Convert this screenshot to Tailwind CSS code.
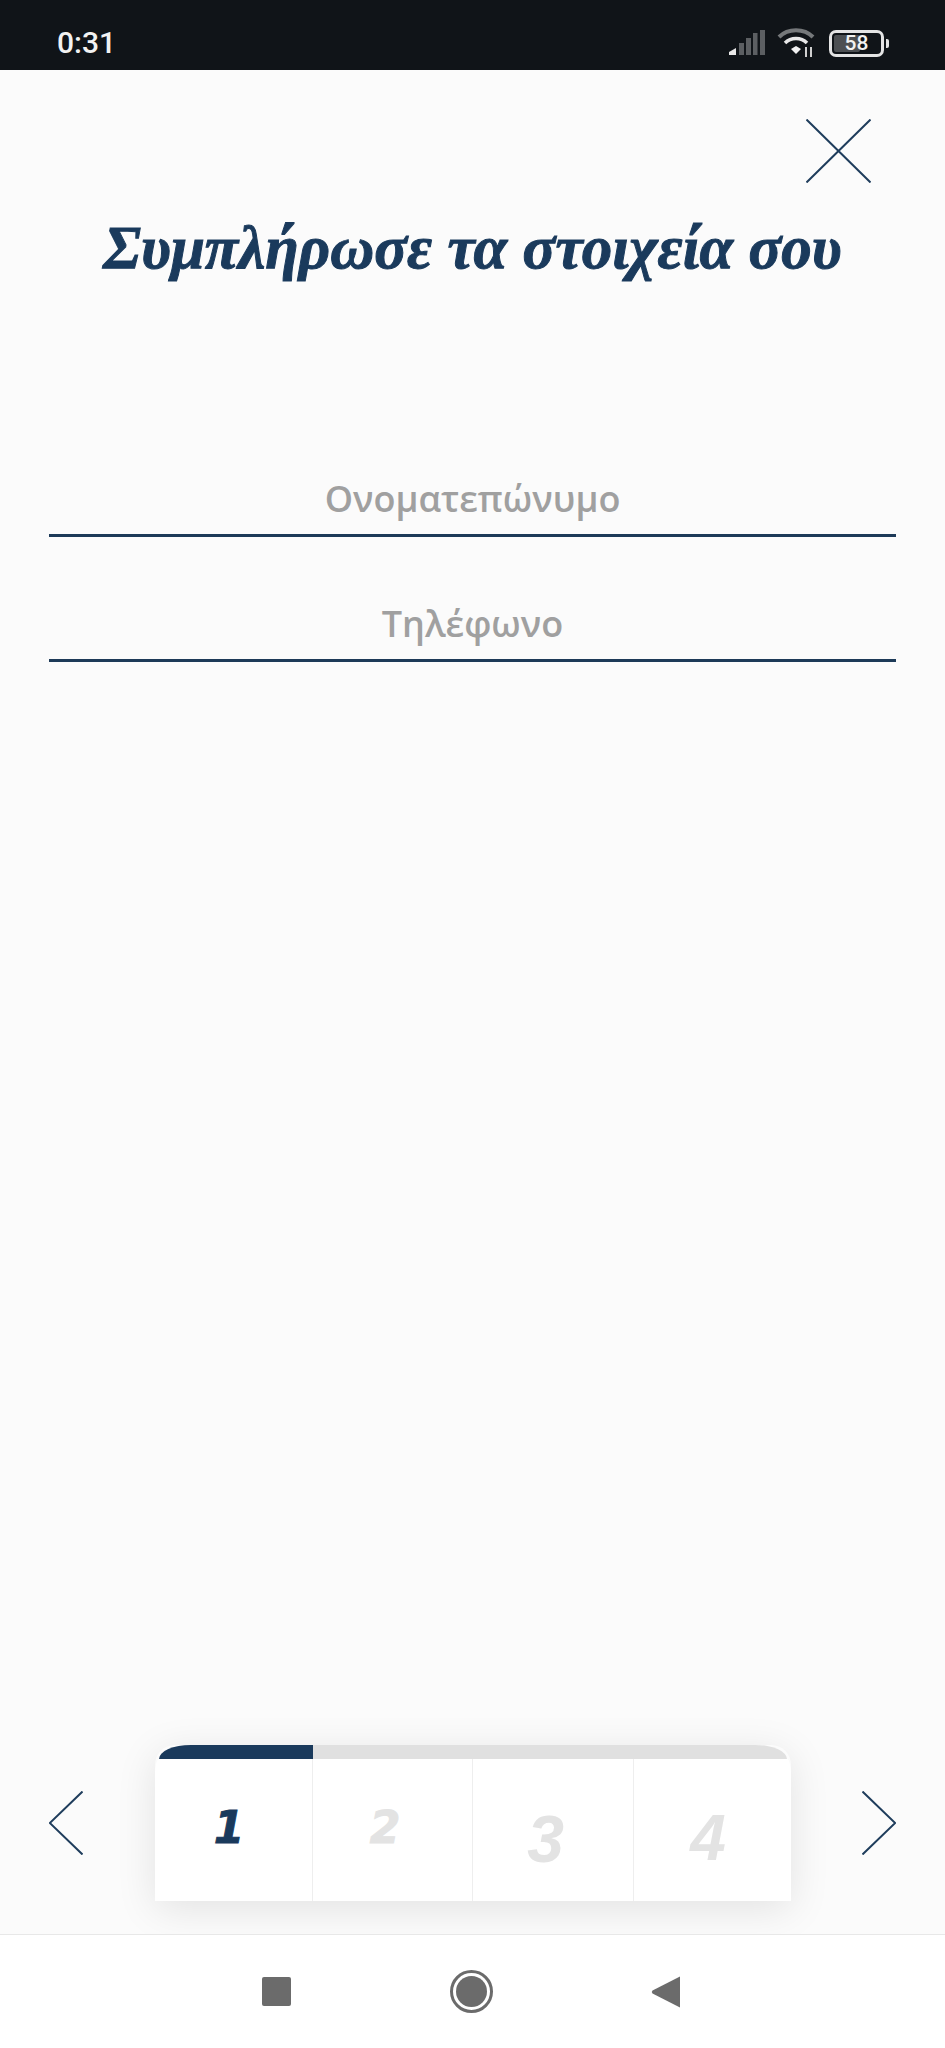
<!DOCTYPE html>
<html lang="el">
<head>
  <meta charset="UTF-8">
  <meta name="viewport" content="width=device-width, initial-scale=1.0">
  <title>Συμπλήρωσε τα στοιχεία σου</title>
  <script src="https://cdn.jsdelivr.net/npm/@tailwindcss/browser@4"></script>
</head>
<body class="h-screen flex flex-col bg-[#fbfbfb] overflow-hidden">
  <!-- Status bar -->
  <div class="h-[70px] shrink-0 bg-[#101418] flex items-center pl-[57px] pr-[56px] pt-[16px]">
    <span class="font-['Roboto',sans-serif] font-medium text-[30px] leading-none text-[#f2f2f2]">0:31</span>
    <div class="ml-auto flex items-center">
      <svg class="w-[36px] h-[26px]" viewBox="0 0 36 26">
        <path d="M0 25v-3l7-4v7z" fill="#e8e8e8"/>
        <rect x="10" y="13" width="5" height="12" fill="#5c5f62"/>
        <rect x="17" y="8" width="5" height="17" fill="#5c5f62"/>
        <rect x="24" y="3" width="4.500" height="22" fill="#5c5f62"/>
        <rect x="31" y="0" width="5" height="25" fill="#5c5f62"/>
      </svg>
      <svg class="w-[40px] h-[30px] ml-[12px]" viewBox="0 0 40 30" fill="none">
        <path d="M2 9C11 0 27 0 36 9" stroke="#75787a" stroke-width="4"/>
        <path d="M8 15C14 9 24 9 30 15" stroke="#e8e8e8" stroke-width="3.5"/>
        <path d="M14 21l5-3 5 3-5 5z" fill="#f2f2f2"/>
        <rect x="28" y="19" width="2" height="10" fill="#d0d0d0"/>
        <rect x="33" y="19" width="2" height="10" fill="#d0d0d0"/>
      </svg>
      <div class="ml-[12px] relative w-[55px] h-[27px] rounded-[7px] border-[3px] border-[#e4e4e4] p-[2px]">
        <div class="h-full w-[58%] bg-[#4c4f52] rounded-[2px]"></div>
        <span class="absolute inset-0 flex items-center justify-center font-['Roboto',sans-serif] font-medium text-[21px] leading-none text-[#f2f2f2]">58</span>
      </div>
      <div class="ml-[2px] w-[3px] h-[9px] bg-[#e4e4e4] rounded-r-[2px]"></div>
    </div>
  </div>

  <main class="flex-1 flex flex-col">
    <!-- Close -->
    <div class="flex justify-end pt-[49px] pr-[74px]">
      <button aria-label="Close">
        <svg class="block w-[65px] h-[64px]" viewBox="0 0 65 64" fill="none" stroke="#1f3d5c" stroke-width="2">
          <path d="M0.5 0.5L64.5 63.5M64.5 0.5L0.5 63.5"/>
        </svg>
      </button>
    </div>

    <h1 class="mt-[30px] text-center font-['Liberation_Serif',serif] font-bold italic text-[61px] leading-[70px] text-[#1a3a5c] [-webkit-text-stroke:1px_#1a3a5c]">Συμπλήρωσε τα στοιχεία σου</h1>

    <!-- Form -->
    <div class="mt-[190px] mx-[49px] flex flex-col gap-[61px] font-['Open_Sans',sans-serif] font-semibold text-[36px]">
      <input type="text" placeholder="Ονοματεπώνυμο" class="w-full h-[64px] pb-[10px] text-center border-b-[3px] border-[#1d3a58] outline-none placeholder:text-[#a0a0a0]">
      <input type="text" placeholder="Τηλέφωνο" class="w-full h-[64px] pb-[10px] text-center border-b-[3px] border-[#1d3a58] outline-none placeholder:text-[#a0a0a0]">
    </div>

    <!-- Stepper -->
    <div class="mt-auto mb-[33px] px-[49px] flex items-center justify-between">
      <button aria-label="Previous">
        <svg class="block w-[34px] h-[64px]" viewBox="0 0 34 64" fill="none" stroke="#1f3d5c" stroke-width="2">
          <path d="M33.5 0.5L0.8 32L33.5 63.5"/>
        </svg>
      </button>

      <div class="w-[636px] shadow-[0_8px_40px_rgba(0,0,0,0.1)] rounded-t-[20px]">
        <div class="mx-[4px] h-[14px] flex bg-[#e0e0e0] rounded-t-[32px_14px] overflow-hidden">
          <div class="w-[154px] bg-[#1a3a5c]"></div>
        </div>
        <div class="h-[142px] bg-white rounded-t-[4px_16px] flex font-bold italic leading-none text-[#e3e3e3]">
          <div class="w-[158px] flex justify-center pt-[47px] pr-[8px] font-['DejaVu_Sans',sans-serif] text-[44px] text-[#1a3a5c] [-webkit-text-stroke:1px_#1a3a5c] border-r border-[#eeeeee]">1</div>
          <div class="w-[160px] flex justify-center pt-[47px] pr-[14px] font-['DejaVu_Sans',sans-serif] text-[44px] [-webkit-text-stroke:1px_#e3e3e3] border-r border-[#eeeeee]">2</div>
          <div class="w-[161px] flex justify-center pt-[47px] pr-[14px] font-['Liberation_Sans',sans-serif] text-[66px] border-r border-[#eeeeee]">3</div>
          <div class="flex-1 flex justify-center pt-[47px] pr-[8px] font-['Liberation_Sans',sans-serif] text-[64px]">4</div>
        </div>
      </div>

      <button aria-label="Next">
        <svg class="block w-[34px] h-[64px]" viewBox="0 0 34 64" fill="none" stroke="#1f3d5c" stroke-width="2">
          <path d="M0.5 0.5L33.2 32L0.5 63.5"/>
        </svg>
      </button>
    </div>
  </main>

  <!-- Navigation bar -->
  <div class="h-[114px] shrink-0 bg-white border-t border-[#e8e8e8] relative flex items-center">
    <div class="absolute left-[262px] top-[42px] w-[29px] h-[29px] rounded-[2px] bg-[#6b6b6b]"></div>
    <div class="absolute left-[450px] top-[35px] w-[43px] h-[43px] rounded-full border-[3px] border-[#6b6b6b] p-[3px]">
      <div class="w-full h-full rounded-full bg-[#6b6b6b]"></div>
    </div>
    <svg class="absolute left-[651px] top-[41px] w-[29px] h-[32px]" viewBox="0 0 29 32">
      <path d="M29 0.5V31.5L1.5 17.5Q0 16 1.5 14.5z" fill="#6b6b6b"/>
    </svg>
  </div>
</body>
</html>
